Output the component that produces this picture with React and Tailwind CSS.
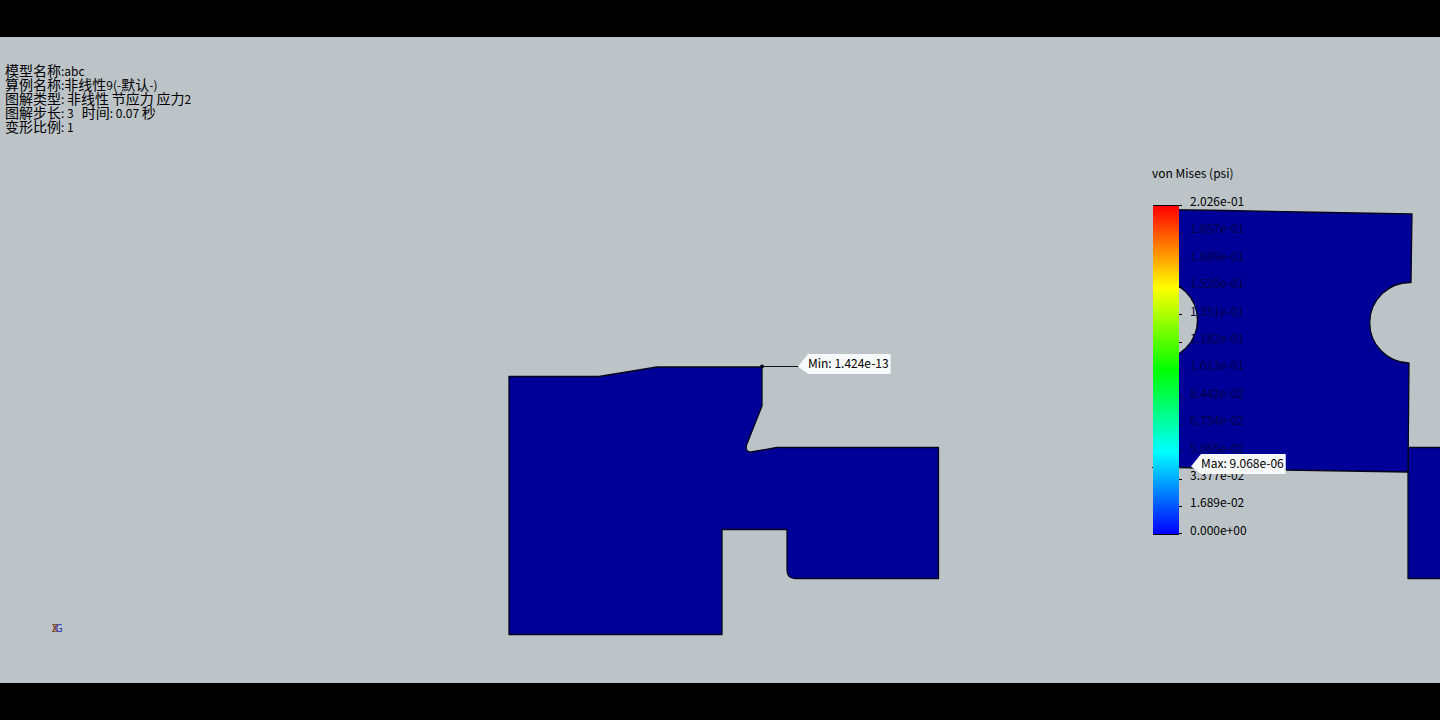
import React from "react";

const levels = [
  "2.026e-01",
  "1.857e-01",
  "1.689e-01",
  "1.520e-01",
  "1.351e-01",
  "1.182e-01",
  "1.013e-01",
  "8.442e-02",
  "6.754e-02",
  "5.065e-02",
  "3.377e-02",
  "1.689e-02",
  "0.000e+00",
];

// levels 1-9 are printed over the dark part and stay dim
const isDim = (i) => i > 0 && i < 10;

// these ticks fall inside the hole, so they are drawn in full black
const inHole = (i) => i >= 3 && i <= 5;

function Latin({ children }) {
  return <span className="text-xs leading-none">{children}</span>;
}

function StudyInfo() {
  return (
    <div className="relative px-[5px] pt-[26px] text-sm leading-[14px] whitespace-pre">
      <p>模型名称<Latin>:abc</Latin></p>
      <p>算例名称<Latin>:</Latin>非线性<Latin>9(-</Latin>默认<Latin>-)</Latin></p>
      <p>图解类型<Latin>: </Latin>非线性<Latin> </Latin>节应力<Latin> </Latin>应力<Latin>2</Latin></p>
      <p>图解步长<Latin>: 3   </Latin>时间<Latin>: 0.07 </Latin>秒</p>
      <p>变形比例<Latin>: 1</Latin></p>
    </div>
  );
}

function Model() {
  return (
    <svg className="absolute inset-0 h-full w-full" aria-hidden="true">
      <g fill="#000099" stroke="#05051c" strokeWidth="1.3" strokeLinejoin="round">
        <path d="M509 339.5H599L657 330H762V369L746.5 408Q745 415 751 415L777 410.5H938.5V541.5H795Q787 541 787 533V492.5H722V597.5H509Z" />
        <path d="M1408 410.5H1600V541.5H1408Z" />
        <path d="M1154 172.5L1225 173.5L1300 175L1412 177L1411 245.5A40 40 0 0 0 1409 326L1408 435L1285 433L1154 430Z" />
        <circle cx="1157.5" cy="283" r="40" fill="#bdc4c8" />
      </g>
      <path d="M1140 170H1153V436H1140ZM1110 235H1153V330H1110Z" fill="#bdc4c8" />
      <path d="M1152 430.5H1192M762 329.5H799" stroke="#111" />
      <circle cx="762" cy="329.5" r="2" fill="#05051c" />
    </svg>
  );
}

function Legend() {
  return (
    <section className="absolute top-32 left-[1152px] text-xs leading-4">
      <h2>von Mises (psi)</h2>
      <div className="mt-4 flex h-[344px] pl-px">
        <div className="mt-2 mb-1.5 w-[26px] border-y border-black bg-[linear-gradient(#ff0000,#ffff00_25%,#00ff00_50%,#00ffff_75%,#0000ff)]" />
        <ul className="flex flex-col justify-between pt-px">
          {levels.map((v, i) => (
            <li key={v} className="flex h-3.5 items-center">
              <span className={isDim(i) && !inHole(i) ? "h-px w-[3px] bg-[#000055]" : "h-px w-[3px] bg-black"} />
              <span className={isDim(i) ? "-mt-2 pl-2 text-[#000048]" : "-mt-2 pl-2"}>{v}</span>
            </li>
          ))}
        </ul>
      </div>
    </section>
  );
}

function Callout({ className, children }) {
  return (
    <div
      className={
        "absolute h-5 bg-[#f7f8f9] pr-0.5 pl-2.5 text-xs leading-[18px] whitespace-nowrap [clip-path:polygon(10px_0,100%_0,100%_100%,10px_100%,0_62%)] " +
        className
      }
    >
      {children}
    </div>
  );
}

function Triad() {
  return (
    <div className="absolute top-[586px] left-[52px] flex text-[10px] leading-[10px]">
      <span className="text-[#7a1f1f]">X</span>
      <span className="-ml-1.5 text-[#7a4a20]">Z</span>
      <span className="-ml-0.5 text-[#2020b0]">G</span>
    </div>
  );
}

export default function App() {
  return (
    <div className="flex h-screen flex-col bg-black font-['Noto_Sans_CJK_SC',sans-serif] text-black">
      <div className="h-[37px] shrink-0" />
      <main className="relative flex-1 overflow-hidden bg-[#bdc4c8]">
        <Model />
        <StudyInfo />
        <Legend />
        <Callout className="top-[317px] left-[798px]">Min: 1.424e-13</Callout>
        <Callout className="top-[417px] left-[1191px]">Max: 9.068e-06</Callout>
        <Triad />
      </main>
      <div className="h-[37px] shrink-0" />
    </div>
  );
}
